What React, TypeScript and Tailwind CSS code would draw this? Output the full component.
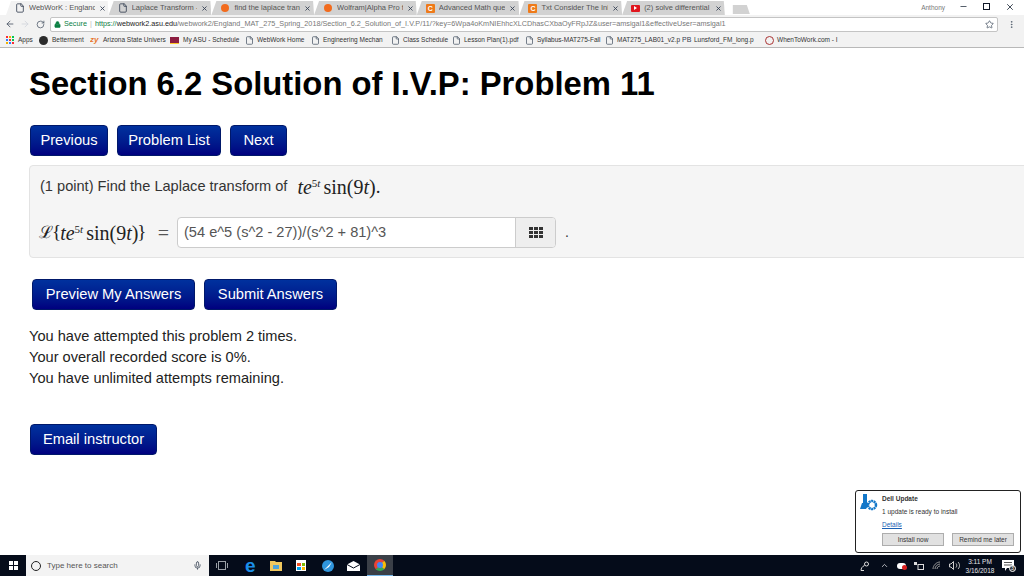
import React from "react";
import { ArrowLeft, ArrowRight, RotateCw, Star, MoreVertical, Lock, X, Minus, File, Mic, ChevronUp } from "lucide-react";

const sans = { fontFamily: '"Liberation Sans", Arial, sans-serif' };
const serif = { fontFamily: '"Liberation Serif", serif' };

const tabs = [
  { title: "WebWorK : England_MAT", kind: "page", active: true },
  { title: "Laplace Transform - www", kind: "page" },
  { title: "find the laplace transfor", kind: "orange" },
  { title: "Wolfram|Alpha Pro for St", kind: "orange" },
  { title: "Advanced Math question", kind: "chegg" },
  { title: "Txt Consider The Initial V", kind: "chegg" },
  { title: "(2) solve differential with", kind: "yt" },
];

const fileIcon = <File className="w-[9px] h-[9px] text-gray-600 mr-[3px] shrink-0" />;

const bookmarks = [
  { label: "Betterment", w: "w-[51px]", icon: <span className="w-[9px] h-[9px] rounded-full bg-[#2b2b2b] mr-[4px] shrink-0" /> },
  { label: "Arizona State Univers", w: "w-[80px]", icon: <span className="w-[9px] text-[8px] font-bold italic text-[#e8772e] mr-[4px] shrink-0">zy</span> },
  { label: "My ASU - Schedule", w: "w-[75px]", icon: <span className="w-[9px] h-[7px] bg-[#8c1d40] border-b border-[#ffc627] mr-[4px] shrink-0" /> },
  { label: "WebWork Home", w: "w-[66px]", icon: fileIcon },
  { label: "Engineering Mechan", w: "w-[80px]", icon: fileIcon },
  { label: "Class Schedule", w: "w-[61px]", icon: fileIcon },
  { label: "Lesson Plan(1).pdf", w: "w-[73px]", icon: fileIcon },
  { label: "Syllabus-MAT275-Fall", w: "w-[80px]", icon: fileIcon },
  { label: "MAT275_LAB01_v2.p", w: "w-[77px]", icon: fileIcon },
  { label: "Lunsford_FM_long.p", w: "w-[83px]", icon: <span className="w-[8px] text-[7px] text-gray-700 mr-[4px] shrink-0">PB</span> },
  { label: "WhenToWork.com - I", w: "w-[80px]", icon: <span className="w-[9px] h-[9px] rounded-full border border-[#a33] mr-[3px] shrink-0" /> },
];

function TabIcon({ kind }: { kind: string }) {
  if (kind === "page") return <File className="w-[10px] h-[10px] text-gray-700 shrink-0" />;
  if (kind === "orange") return <span className="w-[8px] h-[8px] mx-[1px] rounded-full bg-[#f26b1d] shrink-0" />;
  if (kind === "chegg")
    return <span className="w-[9px] h-[9px] rounded-[1px] bg-[#ee7a1a] text-white text-[7px] leading-[9px] text-center font-bold shrink-0">C</span>;
  return (
    <span className="w-[9px] h-[7px] rounded-[1px] bg-[#e0161e] shrink-0 flex items-center justify-center">
      <span className="border-l-[3px] border-l-white border-y-[2px] border-y-transparent" />
    </span>
  );
}

function BlueButton({ children, className }: { children: React.ReactNode; className: string }) {
  return (
    <button className={`h-[31px] rounded-[4px] border border-[#00186a] bg-gradient-to-b from-[#00319e] to-[#00007f] text-white text-[14.7px] leading-none ${className}`}>
      {children}
    </button>
  );
}

function MathExpr() {
  return (
    <span className="text-[#222] text-[20px] whitespace-nowrap" style={serif}>
      <i>te</i>
      <sup className="text-[11px] -top-[7px]">5<i>t</i></sup>
      <span className="ml-[3px]">sin(9<i>t</i>)</span>
    </span>
  );
}

function TrayIcon({ children }: { children: React.ReactNode }) {
  return <span className="w-[17.5px] flex items-center justify-center text-gray-200">{children}</span>;
}

export default function App() {
  return (
    <div className="w-[1024px] h-[576px] overflow-hidden flex flex-col bg-white relative" style={sans}>
      {/* browser chrome */}
      <div className="h-[15px] flex items-end bg-white pl-[6px] shrink-0">
        {tabs.map((t) => (
          <div
            key={t.title}
            className={`w-[102.7px] h-[14px] flex items-center gap-[4px] pl-[9px] pr-[3px] text-[7.5px] [clip-path:polygon(5px_0,calc(100%-1px)_0,100%_100%,0_100%)] ${t.active ? "bg-[#f2f2f2] text-[#555]" : "bg-[#d2d2d2] text-[#555]"}`}
          >
            <TabIcon kind={t.kind} />
            <span className="flex-1 overflow-hidden whitespace-nowrap">{t.title}</span>
            <X className="w-[7px] h-[7px] text-gray-700 shrink-0" strokeWidth={3} />
          </div>
        ))}
        <div className="w-[20px] h-[9px] ml-[5px] mb-[1px] bg-[#d2d2d2] [clip-path:polygon(3px_0,calc(100%-3px)_0,100%_100%,3px_100%)]" />
        <div className="flex-1 flex items-start justify-end h-full">
          <span className="text-[6.5px] text-[#777] mr-[14px] mt-[3px]">Anthony</span>
          <Minus className="w-[9px] h-[9px] text-gray-800 mr-[15px] mt-[2px]" />
          <span className="w-[7px] h-[7px] border-[1.5px] border-gray-900 mr-[15px] mt-[3px]" />
          <X className="w-[10px] h-[10px] text-gray-800 mr-[9px] mt-[2px]" />
        </div>
      </div>
      <div className="h-[18px] bg-[#f2f2f2] flex items-center pl-[5px] pr-[8px] shrink-0">
        <ArrowLeft className="w-[10px] h-[10px] text-gray-600" />
        <ArrowRight className="w-[10px] h-[10px] text-gray-300 ml-[5px]" />
        <RotateCw className="w-[9px] h-[9px] text-gray-600 ml-[6px]" />
        <div className="flex-1 h-[15px] ml-[5px] mr-[9px] bg-white border border-[#c4c4c4] rounded-[2px] flex items-center pl-[3px] pr-[3px] text-[7.25px] overflow-hidden whitespace-nowrap">
          <Lock className="w-[7px] h-[7px] text-[#0b8043] mr-[3px] shrink-0" fill="#0b8043" />
          <span className="text-[#0b8043] mr-[3px]">Secure</span>
          <span className="text-[#bbb] mr-[3px]">|</span>
          <span className="text-[#0b8043]">https://</span>
          <span className="text-[#222]">webwork2.asu.edu</span>
          <span className="text-[#777] flex-1 overflow-hidden">/webwork2/England_MAT_275_Spring_2018/Section_6.2_Solution_of_I.V.P/11/?key=6Wpa4oKmNIEhhcXLCDhasCXbaOyFRpJZ&amp;user=amsigal1&amp;effectiveUser=amsigal1</span>
          <Star className="w-[9px] h-[9px] text-gray-600 shrink-0" />
        </div>
        <MoreVertical className="w-[9px] h-[9px] text-gray-600" />
      </div>
      <div className="h-[15px] bg-[#f2f2f2] border-b border-[#b8b8b8] flex items-center pl-[6px] text-[6.5px] text-[#333] shrink-0 whitespace-nowrap">
        <span className="grid grid-cols-3 gap-[1px] w-[8px] mr-[4px]">
          {["bg-red-500", "bg-yellow-500", "bg-green-500", "bg-blue-500", "bg-red-500", "bg-green-500", "bg-yellow-500", "bg-blue-500", "bg-red-500"].map((c, i) => (
            <span key={i} className={`h-[2px] ${c}`} />
          ))}
        </span>
        <span className="w-[21px]">Apps</span>
        {bookmarks.map((b) => (
          <span key={b.label} className={`${b.w} flex items-center overflow-hidden shrink-0 pr-[5px]`}>
            {b.icon}
            {b.label}
          </span>
        ))}
      </div>

      {/* page */}
      <div className="flex-1 min-h-0 pl-[29px]">
        <h1 className="mt-[18px] text-[32.8px] leading-[36px] font-bold text-black whitespace-nowrap">Section 6.2 Solution of I.V.P: Problem 11</h1>
        <div className="mt-[23px] flex gap-[9px] pl-[1px]">
          <BlueButton className="w-[78px]">Previous</BlueButton>
          <BlueButton className="w-[104px]">Problem List</BlueButton>
          <BlueButton className="w-[57px]">Next</BlueButton>
        </div>
        <div className="mt-[9px] w-[1000px] h-[93px] bg-[#f5f5f5] border border-[#e3e3e3] rounded-[4px] pl-[10px] pt-[9px]">
          <div className="flex items-center h-[24px] text-[14.6px] text-[#333]">
            <span>(1 point) Find the Laplace transform of</span>
            <span className="ml-[10px]"><MathExpr /></span>
            <span className="text-[#222] text-[19px]" style={serif}>.</span>
          </div>
          <div className="flex items-center mt-[18px]">
            <div className="w-[137px] flex items-center text-[#222] whitespace-nowrap">
              <span className="text-[17px] leading-none -ml-[1px]" style={{ fontFamily: '"DejaVu Serif", serif' }}>ℒ</span>
              <span className="text-[19px] -ml-[1px] -mr-[1px]" style={serif}>{"{"}</span>
              <MathExpr />
              <span className="text-[19px] -ml-[1px]" style={serif}>{"}"}</span>
              <span className="text-[20px] text-[#555] ml-auto mr-[8px]" style={serif}>=</span>
            </div>
            <div className="w-[379px] h-[31px] flex bg-white border border-[#ccc] rounded-[4px] overflow-hidden">
              <div className="flex-1 flex items-center pl-[6px] text-[14.6px] text-[#555]">(54 e^5 (s^2 - 27))/(s^2 + 81)^3</div>
              <div className="w-[40px] bg-[#eee] border-l border-[#ccc] flex items-center justify-center">
                <span className="grid grid-cols-3 gap-[1px] w-[14px]">
                  {Array.from({ length: 9 }).map((_, i) => (
                    <span key={i} className="h-[3px] bg-[#333]" />
                  ))}
                </span>
              </div>
            </div>
            <span className="ml-[9px] text-[14px] text-[#333]">.</span>
          </div>
        </div>
        <div className="mt-[21px] flex gap-[9px] pl-[3px]">
          <BlueButton className="w-[163px]">Preview My Answers</BlueButton>
          <BlueButton className="w-[133px]">Submit Answers</BlueButton>
        </div>
        <div className="mt-[16px] text-[14.6px] leading-[21px] text-[#222]">
          <p>You have attempted this problem 2 times.</p>
          <p>Your overall recorded score is 0%.</p>
          <p>You have unlimited attempts remaining.</p>
        </div>
        <BlueButton className="w-[127px] mt-[35px] ml-[1px]">Email instructor</BlueButton>
      </div>

      {/* update toast */}
      <div className="absolute left-[855px] top-[490px] w-[166px] h-[63px] bg-white border border-[#222] rounded-[3px] pl-[26px] pt-[3px] text-[6.5px] text-[#333]">
        <svg className="absolute left-[3px] top-[3px] w-[19px] h-[18px]" viewBox="0 0 19 18">
          <path d="M4 0h4v9h3l-4 6h-6l2-6h1z" fill="#1277c9" />
          <circle cx="13" cy="11" r="4" fill="none" stroke="#1277c9" strokeWidth="2.5" strokeDasharray="2 0.5" />
        </svg>
        <p className="font-bold leading-[9px]">Dell Update</p>
        <p className="mt-[4px] leading-[9px]">1 update is ready to install</p>
        <p className="mt-[4px] leading-[9px] text-[#1a5fb4] underline">Details</p>
        <div className="flex gap-[8px] mt-[4px]">
          <span className="w-[62px] h-[13px] bg-[#e1e1e1] border border-[#adadad] flex items-center justify-center">Install now</span>
          <span className="w-[62px] h-[13px] bg-[#e1e1e1] border border-[#adadad] flex items-center justify-center">Remind me later</span>
        </div>
      </div>

      {/* taskbar */}
      <div className="h-[21px] bg-[#050c1a] flex items-center shrink-0">
        <div className="w-[26px] flex justify-center">
          <span className="grid grid-cols-2 gap-[1px] w-[9px]">
            {[0, 1, 2, 3].map((i) => (
              <span key={i} className="h-[4px] bg-white" />
            ))}
          </span>
        </div>
        <div className="w-[183px] h-full bg-[#f3f3f3] flex items-center pl-[5px] pr-[7px] text-[8px] text-[#555]">
          <span className="w-[10px] h-[10px] rounded-full border-[1.5px] border-[#222] mr-[6px]" />
          <span className="flex-1">Type here to search</span>
          <Mic className="w-[9px] h-[9px] text-gray-700" />
        </div>
        <div className="flex items-center h-full">
          <svg className="w-[12px] h-[9px] ml-[7px]" viewBox="0 0 12 9" fill="none" stroke="#9aa0a6">
            <rect x="2.5" y="0.5" width="7" height="8" />
            <path d="M0.5 2v5M11.5 2v5" />
          </svg>
          <span className="text-[#1b8fe8] text-[19px] font-bold leading-none ml-[17px] w-[11px]">e</span>
          <svg className="w-[12px] h-[10px] ml-[14px]" viewBox="0 0 12 10">
            <path d="M0 0h5l1 1h6v9H0z" fill="#f0c75e" />
            <rect x="3" y="4" width="6" height="4" fill="#4fa3d8" />
          </svg>
          <span className="w-[10px] h-[11px] bg-white ml-[14px] grid grid-cols-2 gap-[1px] p-[1px] pt-[3px]">
            <span className="bg-[#f25022]" />
            <span className="bg-[#7fba00]" />
            <span className="bg-[#00a4ef]" />
            <span className="bg-[#ffb900]" />
          </span>
          <svg className="w-[12px] h-[12px] ml-[16px]" viewBox="0 0 12 12">
            <circle cx="6" cy="6" r="6" fill="#2f95dc" />
            <path d="M2 10 10 2 7 7z" fill="#fff" />
          </svg>
          <svg className="w-[13px] h-[10px] ml-[13px]" viewBox="0 0 13 10">
            <path d="M0 3.5 6.5 0 13 3.5V10H0z" fill="#fff" />
            <path d="M0 3.5 6.5 7 13 3.5" fill="none" stroke="#050c1a" />
          </svg>
          <span className="w-[26px] h-full ml-[7px] bg-[#3a3f47] border-b border-[#76b9ed] flex items-center justify-center">
            <span className="w-[12px] h-[12px] rounded-full bg-[#4285f4] border-[3px] border-[#ea4335] border-b-[#34a853] border-r-[#fbbc05]" />
          </span>
        </div>
        <div className="flex-1 flex items-center justify-end text-[6.5px] text-gray-200">
          <svg className="w-[10px] h-[10px] mr-[6px]" viewBox="0 0 10 10" fill="none" stroke="#ddd">
            <circle cx="6.5" cy="3" r="2" />
            <path d="M1 9.5c0-2 1-4 3.5-5M1 9.5h3" />
          </svg>
          <TrayIcon><ChevronUp className="w-[9px] h-[9px]" /></TrayIcon>
          <TrayIcon>
            <span className="relative w-[9px] h-[6px] rounded-full bg-white">
              <span className="absolute -right-[1px] -bottom-[1px] w-[5px] h-[5px] rounded-full bg-[#d92020]" />
            </span>
          </TrayIcon>
          <TrayIcon>
            <svg className="w-[10px] h-[8px]" viewBox="0 0 10 8" fill="none" stroke="#ddd">
              <rect x="4" y="2.5" width="5.5" height="5" />
              <rect x="0" y="0" width="3" height="3" fill="#ddd" stroke="none" />
            </svg>
          </TrayIcon>
          <TrayIcon>
            <svg className="w-[9px] h-[9px]" viewBox="0 0 9 9" fill="none" stroke="#999">
              <path d="M1 8C1 4.5 4.5 1 8 1M3 8c0-2.5 2.5-5 5-5M5 8c0-1.500 1.500-3 3-3" />
            </svg>
          </TrayIcon>
          <TrayIcon>
            <svg className="w-[11px] h-[9px]" viewBox="0 0 11 9" fill="none" stroke="#ccc">
              <path d="M0.500 3v3h1.500l2.500 2.500v-8L2 3z" />
              <path d="M7 2.500c1 1 1 3 0 4M9 1c2 2 2 5 0 7" />
            </svg>
          </TrayIcon>
          <div className="w-[34px] text-center leading-[9px]">
            <p>3:11 PM</p>
            <p>3/16/2018</p>
          </div>
          <span className="relative w-[22px] flex justify-center mr-[5px]">
            <svg className="w-[12px] h-[12px]" viewBox="0 0 12 12">
              <path d="M0 0h12v8H5L3 11V8H0z" fill="#fff" />
              <path d="M2 2.500h8M2 5h8" stroke="#555" />
            </svg>
            <span className="absolute left-[12px] top-[5px] w-[7px] h-[7px] rounded-full bg-[#333] border border-white text-[5px] leading-[5px] text-center text-white">3</span>
          </span>
        </div>
      </div>
    </div>
  );
}
